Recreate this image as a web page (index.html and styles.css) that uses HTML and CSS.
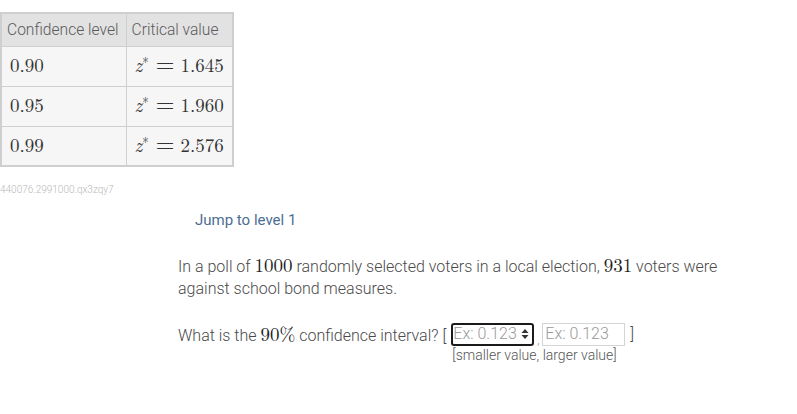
FILE: index.html
```html
<!DOCTYPE html>
<html>
<head>
<meta charset="utf-8">
<link rel="stylesheet" href="styles.css">
</head>
<body>
<div class="page">
  <table class="ztable">
    <thead>
      <tr><th class="c1">Confidence level</th><th class="c2">Critical value</th></tr>
    </thead>
    <tbody>
      <tr><td><span class="m">0.90</span></td><td><span class="m"><i>z</i><sup>*</sup><span class="eq">=</span>1.645</span></td></tr>
      <tr><td><span class="m">0.95</span></td><td><span class="m"><i>z</i><sup>*</sup><span class="eq">=</span>1.960</span></td></tr>
      <tr><td><span class="m">0.99</span></td><td><span class="m"><i>z</i><sup>*</sup><span class="eq">=</span>2.576</span></td></tr>
    </tbody>
  </table>
  <div class="hash">440076.2991000.qx3zqy7</div>
  <div class="content">
    <div class="jump">Jump to level 1</div>
    <p class="q">In a poll of <span class="m">1000</span> randomly selected voters in a local election, <span class="m">931</span> voters were against school bond measures.</p>
    <div class="ask">
      <span class="lead">What is the <span class="m">90%</span> confidence interval? [</span>
      <div class="inputs">
        <div class="row">
          <div class="inp focus"><span class="ph">Ex: 0.123</span><svg class="spin" width="8" height="12" viewBox="0 0 8 12"><path d="M0.5 5 L4 1 L7.5 5 Z M0.5 7 L4 11 L7.5 7 Z" fill="#333"/></svg></div>
          <span class="comma">,</span>
          <div class="inp"><span class="ph">Ex: 0.123</span></div>
          <span class="close">]</span>
        </div>
        <div class="hint">[smaller value, larger value]</div>
      </div>
    </div>
  </div>
</div>
</body>
</html>
```

FILE: styles.css
```css
html, body {
  margin: 0;
  padding: 0;
  background: #ffffff;
}
body {
  font-family: Roboto, "Liberation Sans", sans-serif;
  font-weight: 300;
  color: #4a4a4a;
}
.page {
  padding-top: 12px;
}
.ztable {
  border-collapse: collapse;
  border: 2px solid #cfcfcf;
}
.ztable th {
  background: #e2e2e2;
  font-weight: 300;
  font-size: 15.6px;
  color: #5a5a5a;
  text-align: left;
  height: 33px;
  padding: 0 5px 0 5px;
  border: 1px solid #cfcfcf;
  white-space: nowrap;
  box-sizing: border-box;
}
.ztable th.c1 {
  width: 125px;
}
.ztable th.c2 {
  width: 104px;
}
.ztable td {
  background: #f6f6f6;
  height: 40px;
  padding: 0 8px 3px 8px;
  border: 1px solid #cfcfcf;
  white-space: nowrap;
  box-sizing: border-box;
}
.m {
  font-family: "Latin Modern Roman", "Liberation Serif", "DejaVu Serif", serif;
  font-weight: 400;
  font-size: 19px;
  color: #222;
}
.ztable td .m {
  color: #333;
}
.m i {
  font-style: italic;
}
.m sup {
  font-size: 13px;
  vertical-align: 5px;
  line-height: 0;
}
.eq {
  font-size: 24px;
  margin: 0 6px 0 7px;
  line-height: 0;
}
.hash {
  font-size: 10px;
  color: #b8b8b8;
  margin-top: 17px;
}
.content {
  padding-left: 178px;
  width: 560px;
}
.jump {
  color: #4b6e92;
  font-size: 15px;
  font-weight: 400;
  margin-top: 16px;
  padding-left: 17px;
}
.q {
  margin: 25px 0 0 0;
  font-size: 16px;
  line-height: 22px;
  color: #4a4a4a;
}
.q .m {
  font-size: 19px;
}
.ask {
  display: flex;
  align-items: flex-start;
  margin-top: 22px;
  font-size: 16px;
  line-height: 24px;
  color: #4a4a4a;
}
.ask .m {
  font-size: 19px;
}
.lead {
  white-space: nowrap;
}
.inputs {
  display: flex;
  flex-direction: column;
}
.row {
  display: flex;
  align-items: center;
}
.inp {
  width: 83px;
  height: 23px;
  box-sizing: border-box;
  border: 1px solid #d4d4d4;
  display: flex;
  align-items: center;
  padding-left: 2px;
  font-size: 16px;
  color: #9a9a9a;
}
.inp.focus {
  border: 2px solid #1a1a1a;
  border-radius: 3px;
  padding-left: 0;
  margin-left: 5px;
  justify-content: space-between;
  padding-right: 3px;
}
.ph {
  white-space: nowrap;
}
.spin {
  display: block;
}
.comma {
  width: 8px;
  text-align: center;
  font-size: 12px;
  line-height: 12px;
  align-self: flex-end;
  color: #888;
}
.close {
  padding-left: 5px;
  font-size: 16px;
}
.hint {
  font-size: 14px;
  line-height: 16px;
  color: #555;
  margin-top: 1px;
  padding-left: 6px;
}
```
